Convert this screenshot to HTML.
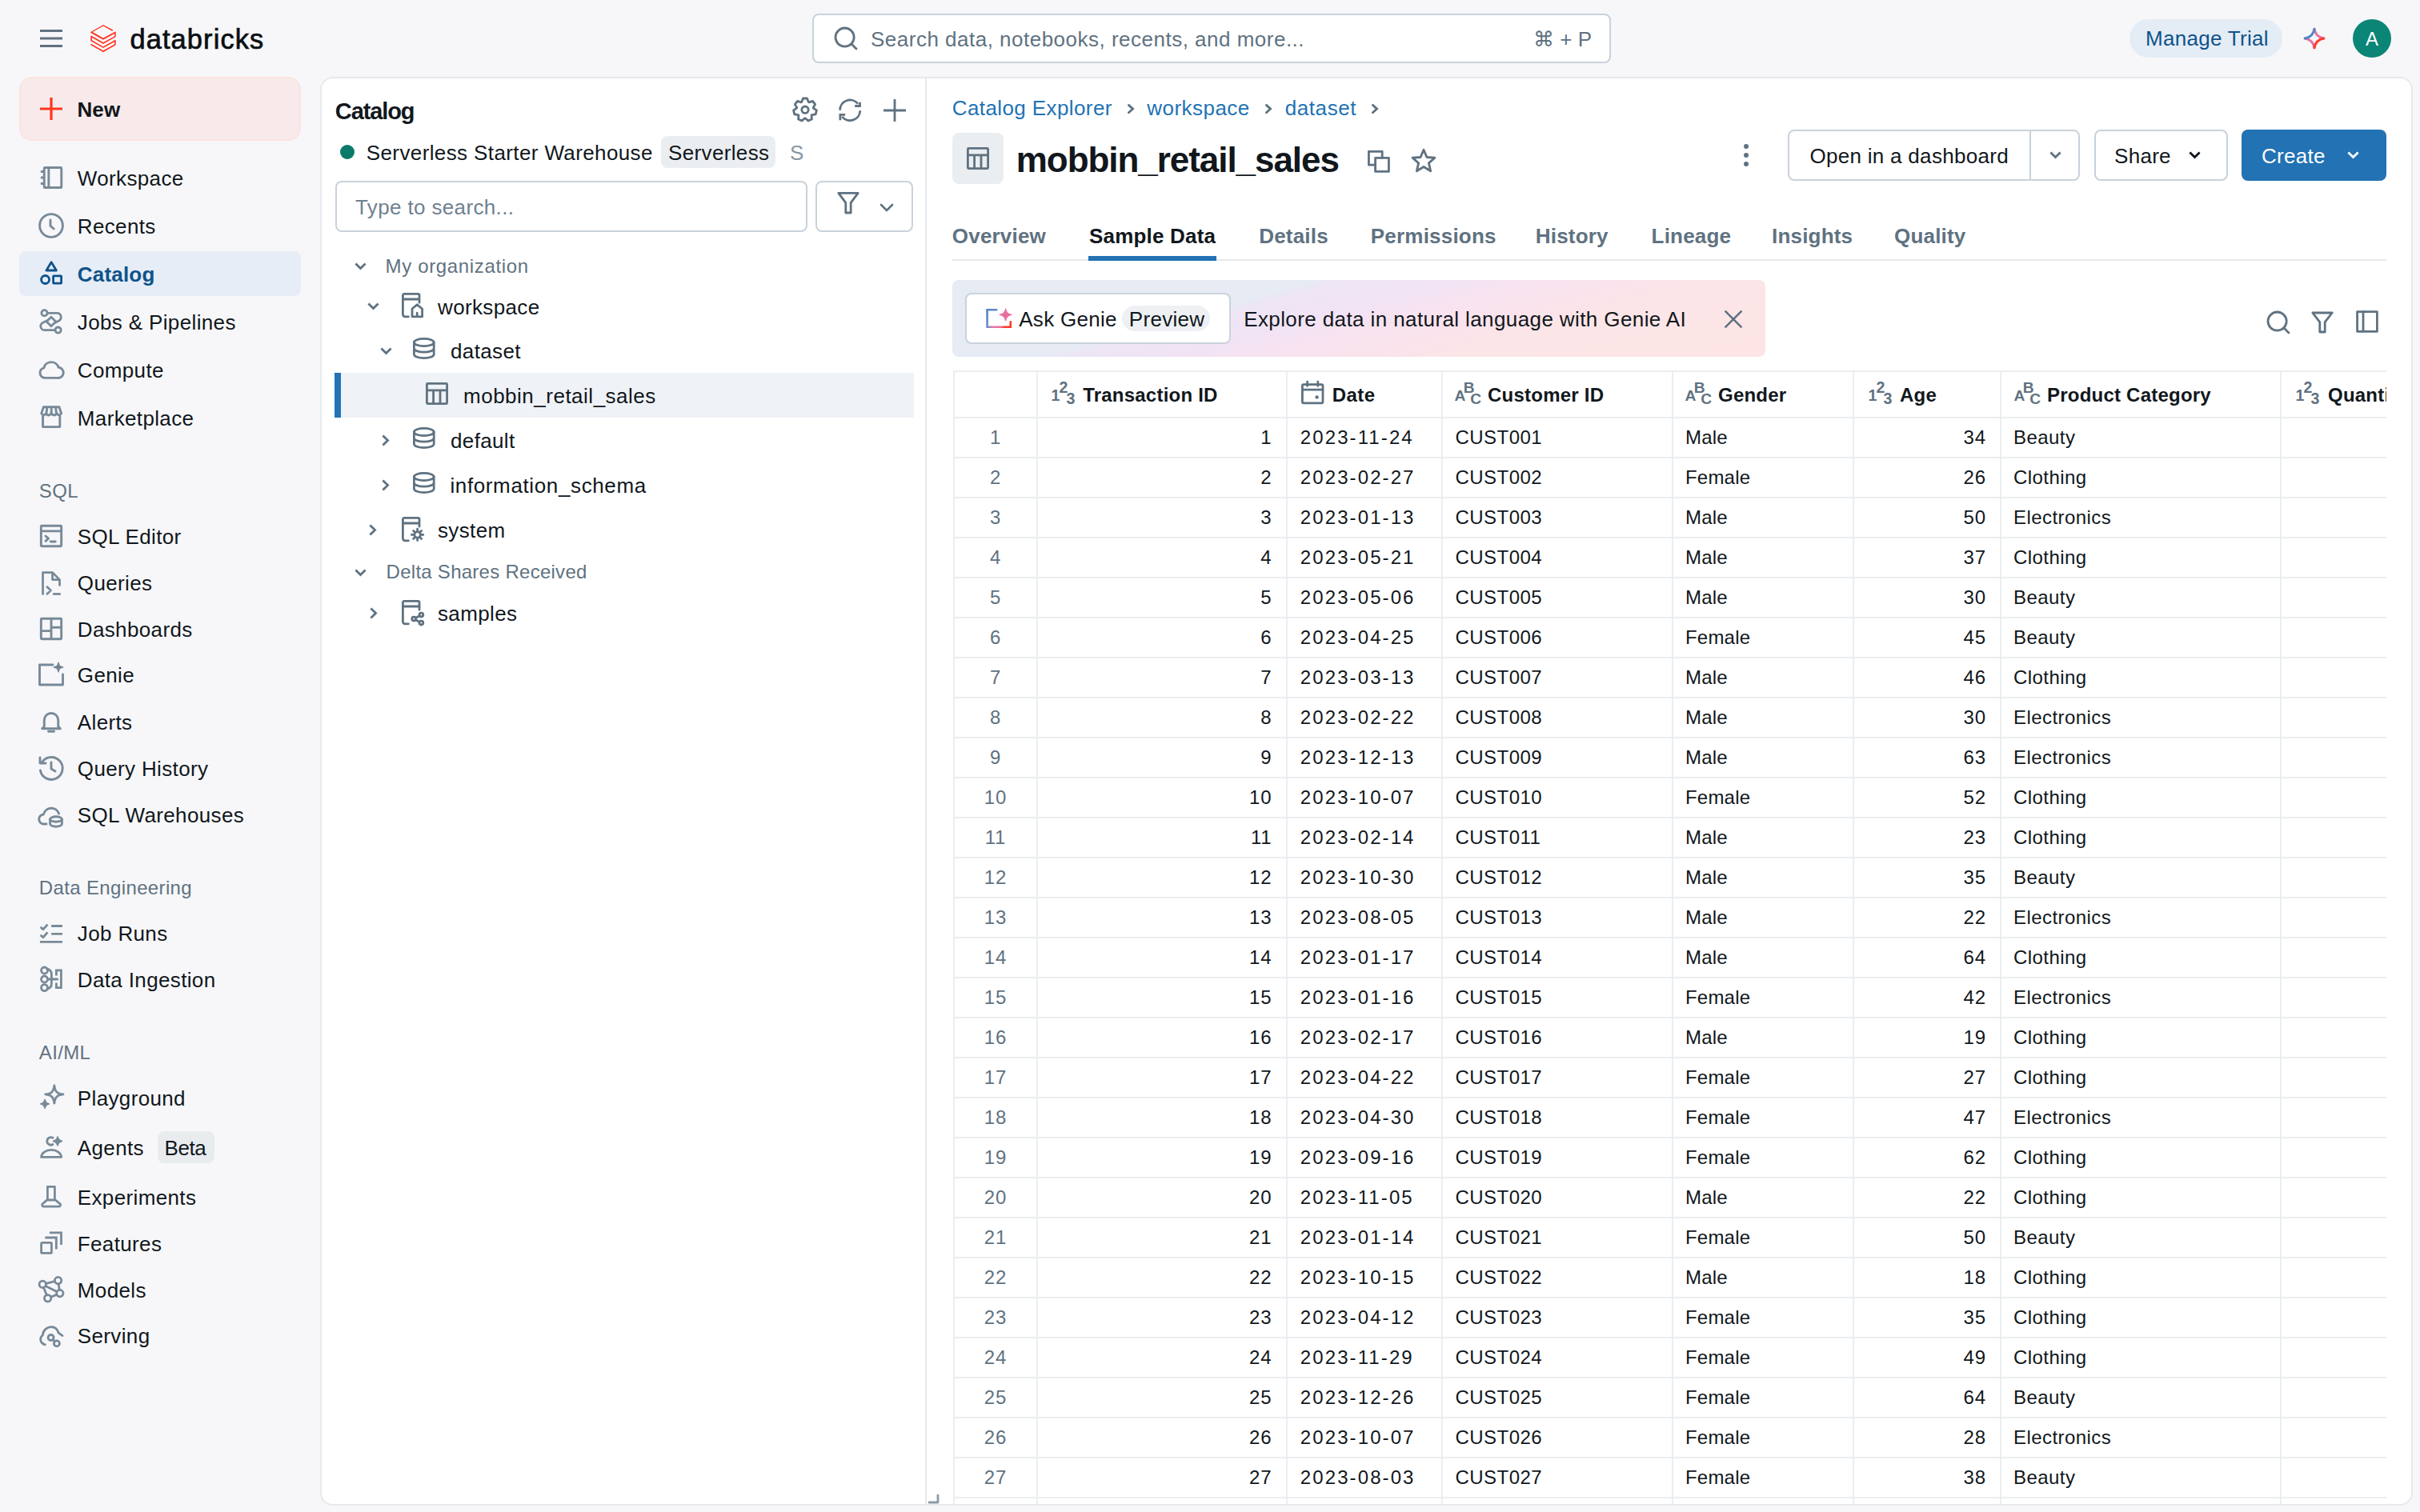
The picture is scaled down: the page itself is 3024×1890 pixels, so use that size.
<!DOCTYPE html>
<html><head><meta charset="utf-8"><title>Catalog Explorer</title>
<style>
html,body{margin:0;padding:0;background:#F7F7F9;overflow:hidden}
#root{position:relative;width:1512px;height:945px;zoom:2;background:#F7F7F9;overflow:hidden;font-family:"Liberation Sans",sans-serif;color:#11171C}
.t{position:absolute;white-space:nowrap}
.b{position:absolute}
.i{position:absolute;overflow:visible}
@media (max-width: 2000px) { #root{zoom:1} }
</style></head><body><div id="root">
<svg class="i" style="left:25px;top:17px" width="14" height="14" viewBox="0 0 14 14" fill="none" stroke="#5F7281" stroke-width="1.5" stroke-linecap="round" stroke-linejoin="round"><path d="M0 2.2H14M0 7H14M0 11.8H14" stroke-linecap="butt"/></svg>
<svg class="i" style="left:56.5px;top:15.5px" width="16" height="17.1" viewBox="0.95 0 22.1 24"><path fill="#FF3621" d="M.95 14.184L12 20.403l9.919-5.55v2.21L12 22.662l-10.484-5.96-.565.308v.77L12 24l11.05-6.218v-4.317l-.515-.309L12 19.118l-9.867-5.653v-2.21L12 16.806l11.05-6.218V6.32l-.515-.308L12 11.6 2.647 6.32 12 1.041l7.76 4.37.668-.359v-.617L12 0 .95 6.32v.614L12 13.207l9.919-5.55v2.26L12 15.52 1.516 9.56l-.565.308Z"/></svg>
<div class="t" style="left:81.2px;top:14.14px;font-size:17.2px;line-height:21.5px;color:#0B0F12;font-weight:400;letter-spacing:0.561px;-webkit-text-stroke:0.35px #0B0F12">databricks</div>
<div class="b" style="left:507.5px;top:8.5px;width:499px;height:31px;background:#fff;border:1px solid #C8D2DC;border-radius:4px;box-sizing:border-box"></div>
<svg class="i" style="left:521px;top:16.5px" width="15" height="15" viewBox="0 0 15 15" fill="none" stroke="#5F7281" stroke-width="1.4" stroke-linecap="round" stroke-linejoin="round"><circle cx="6.8" cy="6.8" r="5.8"/><path d="M11 11 L14 14"/></svg>
<div class="t" style="left:544px;top:16.37px;font-size:13px;line-height:16.25px;color:#5F7281;font-weight:400;letter-spacing:0.247px;">Search data, notebooks, recents, and more...</div>
<div class="t" style="right:517.5px;top:16.37px;font-size:13px;line-height:16.25px;color:#5F7281;font-weight:400;letter-spacing:0px;">&#8984; + P</div>
<div class="b" style="left:1330.5px;top:12px;width:95.5px;height:24px;background:#E4ECF5;border-radius:12px"></div>
<div class="t" style="left:1340.5px;top:15.87px;font-size:13px;line-height:16.25px;color:#0E538B;font-weight:400;letter-spacing:0.15px;">Manage Trial</div>
<svg class="i" style="left:1439px;top:17px" width="14" height="14" viewBox="0 0 14 14" fill="none" stroke="#788A99" stroke-width="1.5" stroke-linecap="round" stroke-linejoin="round"><path d="M7 1.1 C7.6 4.6 9.4 6.4 12.9 7" stroke="#E3739F"/><path d="M1.1 7 C4.6 7.6 6.4 9.4 7 12.9" stroke="#E3739F"/><path d="M7 1.1 C6.4 4.6 4.6 6.4 1.1 7" stroke="#5086C6"/><path d="M12.9 7 C9.4 7.6 7.6 9.4 7 12.9" stroke="#FF3B2B"/></svg>
<div class="b" style="left:1470px;top:12px;width:24px;height:24px;background:#0B8576;border-radius:50%"></div>
<div class="t" style="left:1432.0px;width:100px;text-align:center;top:16.84px;font-size:12px;line-height:15.0px;color:#fff;font-weight:400;letter-spacing:0px">A</div>
<div class="b" style="left:12px;top:48px;width:176px;height:40px;background:#F8EAEA;border:1px solid #FCE3E0;border-radius:8px;box-sizing:border-box"></div>
<svg class="i" style="left:25px;top:61px" width="14" height="14" viewBox="0 0 14 14" fill="none" stroke="#FF3621" stroke-width="1.6" stroke-linecap="round" stroke-linejoin="round"><path d="M7 0V14M0 7H14" stroke-linecap="butt"/></svg>
<div class="t" style="left:48.2px;top:60.37px;font-size:13px;line-height:16.25px;color:#11171C;font-weight:700;letter-spacing:0.1px;">New</div>
<div class="b" style="left:12px;top:157px;width:176px;height:28px;background:#E6EDF6;border-radius:4px"></div>
<svg class="i" style="left:25.10px;top:103.80px" width="14" height="14" viewBox="0 0 16 16" fill="none" stroke="#788A99" stroke-width="1.66" stroke-linecap="round" stroke-linejoin="round"><rect x="3" y="0.9" width="12.3" height="14.2" rx="0.6"/><path d="M6.2 0.9V15.1M0.5 3.7H3M0.5 8H3M0.5 12.3H3" stroke-linecap="butt"/></svg>
<div class="t" style="left:48.4px;top:103.37px;font-size:13px;line-height:16.25px;color:#11171C;font-weight:400;letter-spacing:0.18px;">Workspace</div>
<svg class="i" style="left:24.10px;top:132.80px" width="16" height="16" viewBox="0 0 16 16" fill="none" stroke="#788A99" stroke-width="1.45" stroke-linecap="round" stroke-linejoin="round"><circle cx="8" cy="8" r="7.2"/><path d="M7.5 4.5V8.2L9.6 10"/></svg>
<div class="t" style="left:48.4px;top:133.37px;font-size:13px;line-height:16.25px;color:#11171C;font-weight:400;letter-spacing:0.18px;">Recents</div>
<svg class="i" style="left:22px;top:160px" width="20" height="20" viewBox="0 0 20 20" fill="none" stroke="#0E538B" stroke-width="1.4" stroke-linecap="round" stroke-linejoin="round"><path d="M10.07 3.9 L13.2 9.0 H6.95 Z"/><circle cx="6.28" cy="14.75" r="2.5"/><rect x="11.3" y="12.4" width="5" height="4.7" rx="0.3"/></svg>
<div class="t" style="left:48.4px;top:163.37px;font-size:13px;line-height:16.25px;color:#0E538B;font-weight:700;letter-spacing:0.1px;">Catalog</div>
<svg class="i" style="left:22px;top:190px" width="20" height="20" viewBox="0 0 20 20" fill="none" stroke="#788A99" stroke-width="1.4" stroke-linecap="round" stroke-linejoin="round"><circle cx="5.75" cy="5.65" r="1.8"/><circle cx="14.3" cy="16.3" r="1.8"/><path d="M7.6 5.65 H13.6 A2.55 2.55 0 0 1 14.7 10.5 L12.6 11.6 M7.4 10.4 L5.4 11.4 A2.45 2.45 0 0 0 6.4 16.3 H12.5"/><path d="M9.97 8.1 L12.85 10.98 L9.97 13.86 L7.09 10.98 Z"/></svg>
<div class="t" style="left:48.4px;top:193.37px;font-size:13px;line-height:16.25px;color:#11171C;font-weight:400;letter-spacing:0.18px;">Jobs &amp; Pipelines</div>
<svg class="i" style="left:24.10px;top:222.80px" width="16" height="16" viewBox="0 0 16 16" fill="none" stroke="#788A99" stroke-width="1.45" stroke-linecap="round" stroke-linejoin="round"><path d="M4.2 13.2 H12 A3.3 3.3 0 0 0 12.6 6.6 A4.8 4.8 0 0 0 3.4 6.9 A3.2 3.2 0 0 0 4.2 13.2 Z"/></svg>
<div class="t" style="left:48.4px;top:223.37px;font-size:13px;line-height:16.25px;color:#11171C;font-weight:400;letter-spacing:0.18px;">Compute</div>
<svg class="i" style="left:25.00px;top:253.70px" width="14.2" height="14.2" viewBox="0 0 16 16" fill="none" stroke="#788A99" stroke-width="1.63" stroke-linecap="round" stroke-linejoin="round"><path d="M2 7.5 V15 H14 V7.5 M1 5.5 L2.5 1 H13.5 L15 5.5 Q13.5 8 12 5.5 Q10 8 8 5.5 Q6 8 4 5.5 Q2.5 8 1 5.5Z M5 1 L4.5 5.5 M8 1 V5.5 M11 1 L11.5 5.5"/></svg>
<div class="t" style="left:48.4px;top:253.37px;font-size:13px;line-height:16.25px;color:#11171C;font-weight:400;letter-spacing:0.18px;">Marketplace</div>
<svg class="i" style="left:25.10px;top:327.80px" width="14" height="14" viewBox="0 0 16 16" fill="none" stroke="#788A99" stroke-width="1.66" stroke-linecap="round" stroke-linejoin="round"><rect x="0.75" y="0.75" width="14.5" height="14.5" rx="0.5"/><path d="M0.75 4.5H15.25M4 8L6 9.8L4 11.6M7.5 12H11"/></svg>
<div class="t" style="left:48.4px;top:327.37px;font-size:13px;line-height:16.25px;color:#11171C;font-weight:400;letter-spacing:0.18px;">SQL Editor</div>
<svg class="i" style="left:22px;top:353px" width="20" height="20" viewBox="0 0 20 20" fill="none" stroke="#788A99" stroke-width="1.38" stroke-linecap="round" stroke-linejoin="round"><path d="M4.76 18.25 V4.76 H10.76 L15.27 9.3 V12.8 M10.76 4.76 V9.3 H15.27 M7.4 13.8 L9.7 16 L7.4 18.2"/><path d="M11.05 18.25 H15.9" stroke-linecap="butt"/></svg>
<div class="t" style="left:48.4px;top:356.37px;font-size:13px;line-height:16.25px;color:#11171C;font-weight:400;letter-spacing:0.18px;">Queries</div>
<svg class="i" style="left:25.10px;top:385.80px" width="14" height="14" viewBox="0 0 16 16" fill="none" stroke="#788A99" stroke-width="1.66" stroke-linecap="round" stroke-linejoin="round"><rect x="0.75" y="0.75" width="14.5" height="14.5" rx="0.5"/><path d="M8 0.75V15.25M8 7H15.25M0.75 9.5H8"/></svg>
<div class="t" style="left:48.4px;top:385.37px;font-size:13px;line-height:16.25px;color:#11171C;font-weight:400;letter-spacing:0.18px;">Dashboards</div>
<svg class="i" style="left:24.10px;top:413.50px" width="16" height="16" viewBox="0 0 16 16" fill="none" stroke="#788A99" stroke-width="1.45" stroke-linecap="round" stroke-linejoin="round"><path d="M9 2 H0.75 V14.5 H15.25 V8 M0.75 14.5 H15.25"/><path d="M12.5 0.5 L13.3 2.7 L15.5 3.5 L13.3 4.3 L12.5 6.5 L11.7 4.3 L9.5 3.5 L11.7 2.7Z" fill="#6F7F8C" stroke-width="0.6"/></svg>
<div class="t" style="left:48.4px;top:414.07px;font-size:13px;line-height:16.25px;color:#11171C;font-weight:400;letter-spacing:0.18px;">Genie</div>
<svg class="i" style="left:25.10px;top:443.80px" width="14" height="14" viewBox="0 0 16 16" fill="none" stroke="#788A99" stroke-width="1.66" stroke-linecap="round" stroke-linejoin="round"><path d="M3 11.5 V7 A5 5 0 0 1 13 7 V11.5 L14.5 13 H1.5 Z M6 15 H10"/></svg>
<div class="t" style="left:48.4px;top:443.37px;font-size:13px;line-height:16.25px;color:#11171C;font-weight:400;letter-spacing:0.18px;">Alerts</div>
<svg class="i" style="left:24.10px;top:471.80px" width="16" height="16" viewBox="0 0 16 16" fill="none" stroke="#788A99" stroke-width="1.45" stroke-linecap="round" stroke-linejoin="round"><path d="M2.5 4 A7 7 0 1 1 1.2 9.5 M1 1.5 V5 H4.5 M8 4.5 V8.5 L10.5 10"/></svg>
<div class="t" style="left:48.4px;top:472.37px;font-size:13px;line-height:16.25px;color:#11171C;font-weight:400;letter-spacing:0.18px;">Query History</div>
<svg class="i" style="left:24.10px;top:500.80px" width="16" height="16" viewBox="0 0 16 16" fill="none" stroke="#788A99" stroke-width="1.45" stroke-linecap="round" stroke-linejoin="round"><path d="M5 14 H3.5 A3 3 0 0 1 3.2 8 A5 5 0 0 1 12.8 7.5"/><ellipse cx="11" cy="11" rx="3.7" ry="1.6"/><path d="M7.3 11 V14 A3.7 1.6 0 0 0 14.7 14 V11"/></svg>
<div class="t" style="left:48.4px;top:501.37px;font-size:13px;line-height:16.25px;color:#11171C;font-weight:400;letter-spacing:0.18px;">SQL Warehouses</div>
<svg class="i" style="left:22px;top:572px" width="20" height="20" viewBox="0 0 20 20" fill="none" stroke="#788A99" stroke-width="1.4" stroke-linecap="round" stroke-linejoin="round"><path d="M3.3 7.4 L4.9 8.9 L7.75 5.8 M3.3 12.4 L4.9 13.9 L7.75 10.7" stroke-linecap="butt"/><path d="M10.07 6.76 H17.0 M10.07 11.7 H17.0 M2.96 16.7 H17.0" stroke-linecap="butt"/></svg>
<div class="t" style="left:48.4px;top:575.37px;font-size:13px;line-height:16.25px;color:#11171C;font-weight:400;letter-spacing:0.18px;">Job Runs</div>
<svg class="i" style="left:22px;top:601px" width="20" height="20" viewBox="0 0 20 20" fill="none" stroke="#788A99" stroke-width="1.4" stroke-linecap="round" stroke-linejoin="round"><circle cx="5.77" cy="5.5" r="2.0"/><circle cx="5.77" cy="11" r="2.0"/><circle cx="5.77" cy="16.3" r="2.0"/><path d="M7.4 4.6 Q10.2 5.2 10.2 8 V13.8 Q10.2 16.6 7.4 17.2 M7.8 11 H13.9"/><path d="M13.2 8.7 V5.4 H16.2 V16.3 H13.2 V13.3" stroke-linecap="butt" stroke-linejoin="miter"/></svg>
<div class="t" style="left:48.4px;top:604.37px;font-size:13px;line-height:16.25px;color:#11171C;font-weight:400;letter-spacing:0.18px;">Data Ingestion</div>
<svg class="i" style="left:22px;top:675px" width="20" height="20" viewBox="0 0 20 20" fill="none" stroke="#788A99" stroke-width="1.4" stroke-linecap="round" stroke-linejoin="round"><path d="M11.93 3.4 C12.4 7.3 13.6 8.5 17.5 8.99 C13.6 9.5 12.4 10.7 11.93 14.6 C11.45 10.7 10.25 9.5 6.35 8.99 C10.25 8.5 11.45 7.3 11.93 3.4Z"/><path d="M6.03 12.3 Q6.4 14.5 8.6 14.9 Q6.4 15.3 6.03 17.5 Q5.66 15.3 3.46 14.9 Q5.66 14.5 6.03 12.3Z" fill="#788A99" stroke-width="0.9"/></svg>
<div class="t" style="left:48.4px;top:678.37px;font-size:13px;line-height:16.25px;color:#11171C;font-weight:400;letter-spacing:0.18px;">Playground</div>
<svg class="i" style="left:22px;top:706px" width="20" height="20" viewBox="0 0 20 20" fill="none" stroke="#788A99" stroke-width="1.4" stroke-linecap="round" stroke-linejoin="round"><path d="M11 9.28 A2.4 2.4 0 1 1 11 5.12"/><path d="M14 4.6 Q14.4 6.8 16.6 7.2 Q14.4 7.6 14 9.8 Q13.6 7.6 11.4 7.2 Q13.6 6.8 14 4.6Z" fill="#788A99" stroke-width="1"/><path d="M3.8 17.2 A6.25 4.5 0 0 1 16.3 17.2 Z"/></svg>
<div class="t" style="left:48.4px;top:709.37px;font-size:13px;line-height:16.25px;color:#11171C;font-weight:400;letter-spacing:0.18px;">Agents</div>
<svg class="i" style="left:22px;top:737px" width="20" height="20" viewBox="0 0 20 20" fill="none" stroke="#788A99" stroke-width="1.4" stroke-linecap="round" stroke-linejoin="round"><path d="M7.7 12.7 V4.7 H12.2 V12.7 L15.7 15.6 A1.1 1.1 0 0 1 15 17.1 H5.1 A1.1 1.1 0 0 1 4.4 15.6 Z M7.7 13 H12.2"/></svg>
<div class="t" style="left:48.4px;top:740.37px;font-size:13px;line-height:16.25px;color:#11171C;font-weight:400;letter-spacing:0.18px;">Experiments</div>
<svg class="i" style="left:22px;top:766px" width="20" height="20" viewBox="0 0 20 20" fill="none" stroke="#788A99" stroke-width="1.4" stroke-linecap="round" stroke-linejoin="round"><rect x="3.8" y="10.7" width="6.4" height="6.5" rx="0.6"/><path d="M6.15 7.5 H13.17 V14.8 M8.96 4.4 H16.26 V12" stroke-linecap="butt" stroke-linejoin="miter"/></svg>
<div class="t" style="left:48.4px;top:769.37px;font-size:13px;line-height:16.25px;color:#11171C;font-weight:400;letter-spacing:0.18px;">Features</div>
<svg class="i" style="left:22px;top:795px" width="20" height="20" viewBox="0 0 20 20" fill="none" stroke="#788A99" stroke-width="1.4" stroke-linecap="round" stroke-linejoin="round"><circle cx="4.63" cy="7.7" r="2.1"/><circle cx="14.3" cy="5.3" r="2.1"/><circle cx="15.4" cy="13.3" r="2.1"/><circle cx="7.83" cy="16.4" r="2.1"/><path d="M6.7 7.2 L12.2 5.8 M6.4 8.8 L13.5 12.2 M5.2 9.7 L7.2 14.4 M14.6 7.4 L15.1 11.2 M13.4 14.2 L9.8 15.6"/></svg>
<div class="t" style="left:48.4px;top:798.37px;font-size:13px;line-height:16.25px;color:#11171C;font-weight:400;letter-spacing:0.18px;">Models</div>
<svg class="i" style="left:22px;top:823.6px" width="20" height="20" viewBox="0 0 20 20" fill="none" stroke="#788A99" stroke-width="1.4" stroke-linecap="round" stroke-linejoin="round"><path d="M6.2 16.9 C3.5 16.4 2.2 13.2 4.6 11 C5.2 7.2 8 5.8 10 5.8 C12.3 5.8 13.9 7.4 14.5 9.4 L17 11.3"/><circle cx="9.8" cy="12.5" r="1.75"/><circle cx="13.45" cy="16.2" r="1.75"/><path d="M11 13.7 L12.2 15"/></svg>
<div class="t" style="left:48.4px;top:826.97px;font-size:13px;line-height:16.25px;color:#11171C;font-weight:400;letter-spacing:0.18px;">Serving</div>
<div class="t" style="left:24.4px;top:299.34px;font-size:12px;line-height:15.0px;color:#5F7281;font-weight:400;letter-spacing:0.18px;">SQL</div>
<div class="t" style="left:24.4px;top:547.34px;font-size:12px;line-height:15.0px;color:#5F7281;font-weight:400;letter-spacing:0.18px;">Data Engineering</div>
<div class="t" style="left:24.4px;top:650.34px;font-size:12px;line-height:15.0px;color:#5F7281;font-weight:400;letter-spacing:0.18px;">AI/ML</div>
<div class="b" style="left:98.5px;top:707px;width:35.5px;height:20px;background:#E9ECEF;border-radius:4px"></div>
<div class="t" style="left:102.8px;top:709.37px;font-size:13px;line-height:16.25px;color:#11171C;font-weight:400;letter-spacing:-0.236px;">Beta</div>
<div class="b" style="left:200px;top:48px;width:1307.5px;height:893px;background:#fff;border:1px solid #E6E9ED;border-radius:8px;box-sizing:border-box"></div>
<div class="b" style="left:578px;top:49px;width:1px;height:891px;background:#E6E9ED"></div>
<div class="t" style="left:209.4px;top:60.72px;font-size:14.5px;line-height:18.12px;color:#11171C;font-weight:700;letter-spacing:-0.553px;">Catalog</div>
<svg class="i" style="left:495px;top:61px" width="16" height="16" viewBox="0 0 16 16" fill="none" stroke="#5F7281" stroke-width="1.4" stroke-linecap="round" stroke-linejoin="round"><path d="M5.84 2.76 L6.75 0.51 L9.25 0.51 L10.16 2.76 L10.44 2.90 L12.76 2.20 L14.32 4.16 L13.13 6.27 L13.20 6.58 L15.19 7.96 L14.63 10.40 L12.24 10.78 L12.04 11.03 L12.20 13.45 L9.95 14.53 L8.16 12.90 L7.84 12.90 L6.05 14.53 L3.80 13.45 L3.96 11.03 L3.76 10.78 L1.37 10.40 L0.81 7.96 L2.80 6.58 L2.87 6.27 L1.68 4.16 L3.24 2.20 L5.56 2.90 Z"/><circle cx="8" cy="7.6" r="2.1"/></svg>
<svg class="i" style="left:523px;top:61px" width="16" height="16" viewBox="0 0 16 16" fill="none" stroke="#5F7281" stroke-width="1.4" stroke-linecap="round" stroke-linejoin="round"><path d="M1.8 7.9 A6.3 6.3 0 0 1 13 3.85 M3.2 11.95 A6.3 6.3 0 0 0 14.4 8.1" stroke-linecap="butt"/><path d="M14.25 2.9 V5.25 H11.1 M1.95 14.1 V10.7 H5.1" stroke-linecap="butt" stroke-linejoin="miter"/></svg>
<svg class="i" style="left:552px;top:62px" width="14" height="14" viewBox="0 0 14 14" fill="none" stroke="#5F7281" stroke-width="1.4" stroke-linecap="round" stroke-linejoin="round"><path d="M7 0V14M0 7H14" stroke-linecap="butt"/></svg>
<div class="b" style="left:212.6px;top:90.6px;width:9px;height:9px;background:#0A7A69;border-radius:50%"></div>
<div class="t" style="left:228.9px;top:87.27px;font-size:13px;line-height:16.25px;color:#11171C;font-weight:400;letter-spacing:0.192px;">Serverless Starter Warehouse</div>
<div class="b" style="left:413px;top:85px;width:71.3px;height:20px;background:#EBEEF1;border-radius:4px"></div>
<div class="t" style="left:417.5px;top:87.27px;font-size:13px;line-height:16.25px;color:#11171C;font-weight:400;letter-spacing:0.18px;">Serverless</div>
<div class="t" style="left:493.5px;top:87.27px;font-size:13px;line-height:16.25px;color:#8696A3;font-weight:400;letter-spacing:0.18px;">S</div>
<div class="b" style="left:209.5px;top:113px;width:295px;height:32px;background:#fff;border:1px solid #C8D2DC;border-radius:4px;box-sizing:border-box"></div>
<div class="t" style="left:222px;top:121.37px;font-size:13px;line-height:16.25px;color:#6F8190;font-weight:400;letter-spacing:0.18px;">Type to search...</div>
<div class="b" style="left:509.3px;top:113px;width:61.2px;height:32px;background:#fff;border:1px solid #C8D2DC;border-radius:4px;box-sizing:border-box"></div>
<svg class="i" style="left:523px;top:119.5px" width="14" height="15" viewBox="0 0 14 15" fill="none" stroke="#5F7281" stroke-width="1.4" stroke-linecap="round" stroke-linejoin="round"><path d="M0.9 1.2 H13.1 L8.6 7.2 V13.5 H5.4 V7.2 Z"/></svg>
<svg class="i" style="left:549px;top:125.5px" width="10" height="8" viewBox="0 0 10 8" fill="none" stroke="#5F7281" stroke-width="1.3" stroke-linecap="round" stroke-linejoin="round"><path d="M1.5 2.5 L5 6 L8.5 2.5"/></svg>
<svg class="i" style="left:221.25px;top:164.2px" width="7.5" height="4.6" viewBox="0 0 7.5 4.6" fill="none" stroke="#5F7281" stroke-width="1.4" stroke-linecap="round" stroke-linejoin="round"><path d="M0.7 0.7 L3.75 3.8 L6.8 0.7" stroke-linecap="butt" stroke-linejoin="miter"/></svg>
<div class="t" style="left:240.8px;top:159.24px;font-size:12px;line-height:15.0px;color:#5F7281;font-weight:400;letter-spacing:0.326px;">My organization</div>
<svg class="i" style="left:229.25px;top:189.2px" width="7.5" height="4.6" viewBox="0 0 7.5 4.6" fill="none" stroke="#5F7281" stroke-width="1.4" stroke-linecap="round" stroke-linejoin="round"><path d="M0.7 0.7 L3.75 3.8 L6.8 0.7" stroke-linecap="butt" stroke-linejoin="miter"/></svg>
<svg class="i" style="left:251.2px;top:183.2px" width="14" height="16" viewBox="0 0 14 16" fill="none" stroke="#5F7281" stroke-width="1.4" stroke-linecap="round" stroke-linejoin="round"><path d="M11 6.1 V1.5 A0.8 0.8 0 0 0 10.2 0.7 H1.5 A0.8 0.8 0 0 0 0.7 1.5 V13.5 A1.4 1.4 0 0 0 2.1 14.9 H4.2 M0.7 4 H11 M6.5 14.9 V10 L9.6 7.4 L12.8 10 V14.9 Z M9.6 14.9 V12.6"/></svg>
<div class="t" style="left:273.5px;top:183.77px;font-size:13px;line-height:16.25px;color:#11171C;font-weight:400;letter-spacing:0.18px;">workspace</div>
<svg class="i" style="left:237.25px;top:217.1px" width="7.5" height="4.6" viewBox="0 0 7.5 4.6" fill="none" stroke="#5F7281" stroke-width="1.4" stroke-linecap="round" stroke-linejoin="round"><path d="M0.7 0.7 L3.75 3.8 L6.8 0.7" stroke-linecap="butt" stroke-linejoin="miter"/></svg>
<svg class="i" style="left:258.1px;top:211.2px" width="14" height="14" viewBox="0 0 14 14" fill="none" stroke="#5F7281" stroke-width="1.4" stroke-linecap="round" stroke-linejoin="round"><ellipse cx="6.9" cy="3" rx="6.2" ry="2.3"/><path d="M0.7 3 V10.5 A6.2 2.3 0 0 0 13.1 10.5 V3 M0.7 6.8 A6.2 2.3 0 0 0 13.1 6.8"/></svg>
<div class="t" style="left:281.5px;top:211.57px;font-size:13px;line-height:16.25px;color:#11171C;font-weight:400;letter-spacing:0.18px;">dataset</div>
<div class="b" style="left:209px;top:233px;width:362px;height:28px;background:#EFF2F6"></div>
<div class="b" style="left:209px;top:233px;width:4px;height:28px;background:#2272B4"></div>
<svg class="i" style="left:266px;top:239px" width="14" height="14" viewBox="0 0 14 14" fill="none" stroke="#5F7281" stroke-width="1.4" stroke-linecap="round" stroke-linejoin="round"><rect x="0.7" y="0.7" width="12.6" height="12.6" rx="0.5"/><path d="M0.7 4.95 H13.3 M4.8 4.95 V13.3 M9.0 4.95 V13.3"/></svg>
<div class="t" style="left:289.5px;top:239.37px;font-size:13px;line-height:16.25px;color:#11171C;font-weight:400;letter-spacing:0.252px;">mobbin_retail_sales</div>
<svg class="i" style="left:238.7px;top:271.25px" width="4.6" height="7.5" viewBox="0 0 4.6 7.5" fill="none" stroke="#5F7281" stroke-width="1.4" stroke-linecap="round" stroke-linejoin="round"><path d="M0.7 0.7 L3.8 3.75 L0.7 6.8" stroke-linecap="butt" stroke-linejoin="miter"/></svg>
<svg class="i" style="left:258.1px;top:267.2px" width="14" height="14" viewBox="0 0 14 14" fill="none" stroke="#5F7281" stroke-width="1.4" stroke-linecap="round" stroke-linejoin="round"><ellipse cx="6.9" cy="3" rx="6.2" ry="2.3"/><path d="M0.7 3 V10.5 A6.2 2.3 0 0 0 13.1 10.5 V3 M0.7 6.8 A6.2 2.3 0 0 0 13.1 6.8"/></svg>
<div class="t" style="left:281.5px;top:267.37px;font-size:13px;line-height:16.25px;color:#11171C;font-weight:400;letter-spacing:0.18px;">default</div>
<svg class="i" style="left:238.7px;top:299.25px" width="4.6" height="7.5" viewBox="0 0 4.6 7.5" fill="none" stroke="#5F7281" stroke-width="1.4" stroke-linecap="round" stroke-linejoin="round"><path d="M0.7 0.7 L3.8 3.75 L0.7 6.8" stroke-linecap="butt" stroke-linejoin="miter"/></svg>
<svg class="i" style="left:258.1px;top:295.2px" width="14" height="14" viewBox="0 0 14 14" fill="none" stroke="#5F7281" stroke-width="1.4" stroke-linecap="round" stroke-linejoin="round"><ellipse cx="6.9" cy="3" rx="6.2" ry="2.3"/><path d="M0.7 3 V10.5 A6.2 2.3 0 0 0 13.1 10.5 V3 M0.7 6.8 A6.2 2.3 0 0 0 13.1 6.8"/></svg>
<div class="t" style="left:281.2px;top:295.37px;font-size:13px;line-height:16.25px;color:#11171C;font-weight:400;letter-spacing:0.314px;">information_schema</div>
<svg class="i" style="left:230.7px;top:327.25px" width="4.6" height="7.5" viewBox="0 0 4.6 7.5" fill="none" stroke="#5F7281" stroke-width="1.4" stroke-linecap="round" stroke-linejoin="round"><path d="M0.7 0.7 L3.8 3.75 L0.7 6.8" stroke-linecap="butt" stroke-linejoin="miter"/></svg>
<svg class="i" style="left:251.2px;top:323.2px" width="14" height="16" viewBox="0 0 14 16" fill="none" stroke="#5F7281" stroke-width="1.4" stroke-linecap="round" stroke-linejoin="round"><path d="M11 6.1 V1.5 A0.8 0.8 0 0 0 10.2 0.7 H1.5 A0.8 0.8 0 0 0 0.7 1.5 V13.5 A1.4 1.4 0 0 0 2.1 14.9 H4.2 M0.7 4 H11"/><circle cx="9.8" cy="11.2" r="1.9"/><path d="M9.8 7.6V8.6M9.8 13.8V14.8M6.2 11.2H7.2M12.4 11.2H13.4M7.3 8.7L8 9.4M11.6 13L12.3 13.7M7.3 13.7L8 13M11.6 9.4L12.3 8.7"/></svg>
<div class="t" style="left:273.5px;top:323.37px;font-size:13px;line-height:16.25px;color:#11171C;font-weight:400;letter-spacing:0.18px;">system</div>
<svg class="i" style="left:221.25px;top:355.3px" width="7.5" height="4.6" viewBox="0 0 7.5 4.6" fill="none" stroke="#5F7281" stroke-width="1.4" stroke-linecap="round" stroke-linejoin="round"><path d="M0.7 0.7 L3.75 3.8 L6.8 0.7" stroke-linecap="butt" stroke-linejoin="miter"/></svg>
<div class="t" style="left:241.3px;top:349.84px;font-size:12px;line-height:15.0px;color:#5F7281;font-weight:400;letter-spacing:0.132px;">Delta Shares Received</div>
<svg class="i" style="left:231.1px;top:379.25px" width="4.6" height="7.5" viewBox="0 0 4.6 7.5" fill="none" stroke="#5F7281" stroke-width="1.4" stroke-linecap="round" stroke-linejoin="round"><path d="M0.7 0.7 L3.8 3.75 L0.7 6.8" stroke-linecap="butt" stroke-linejoin="miter"/></svg>
<svg class="i" style="left:251.2px;top:375.2px" width="14" height="16" viewBox="0 0 14 16" fill="none" stroke="#5F7281" stroke-width="1.4" stroke-linecap="round" stroke-linejoin="round"><path d="M11 6.1 V1.5 A0.8 0.8 0 0 0 10.2 0.7 H1.5 A0.8 0.8 0 0 0 0.7 1.5 V13.5 A1.4 1.4 0 0 0 2.1 14.9 H4.2"/><path d="M0.7 4 H11"/><circle cx="12.2" cy="9.3" r="1.2"/><circle cx="7.6" cy="11.8" r="1.2"/><circle cx="12.2" cy="14.3" r="1.2"/><path d="M8.7 11.2 L11.1 9.9 M8.7 12.4 L11.1 13.7"/></svg>
<div class="t" style="left:273.5px;top:375.37px;font-size:13px;line-height:16.25px;color:#11171C;font-weight:400;letter-spacing:0.18px;">samples</div>
<svg class="i" style="left:580px;top:934px" width="7" height="6" viewBox="0 0 7 6" fill="none" stroke="#8E9BA6" stroke-width="1.4" stroke-linecap="round" stroke-linejoin="round"><path d="M6 0 V5 H0" stroke-linecap="butt"/></svg>
<div class="t" style="left:594.9px;top:59.37px;font-size:13px;line-height:16.25px;color:#2272B4;font-weight:400;letter-spacing:0.198px;">Catalog Explorer</div>
<div class="t" style="left:716.6px;top:59.37px;font-size:13px;line-height:16.25px;color:#2272B4;font-weight:400;letter-spacing:0.24px;">workspace</div>
<div class="t" style="left:802.9px;top:59.37px;font-size:13px;line-height:16.25px;color:#2272B4;font-weight:400;letter-spacing:0.28px;">dataset</div>
<svg class="i" style="left:704.35px;top:64.75px" width="4" height="6.1" viewBox="0 0 4 6.1" fill="none" stroke="#5F7281" stroke-width="1.4" stroke-linecap="round" stroke-linejoin="round"><path d="M0.7 0.7 L3.3 3.05 L0.7 5.4" stroke-linejoin="miter"/></svg>
<svg class="i" style="left:790.3px;top:64.75px" width="4" height="6.1" viewBox="0 0 4 6.1" fill="none" stroke="#5F7281" stroke-width="1.4" stroke-linecap="round" stroke-linejoin="round"><path d="M0.7 0.7 L3.3 3.05 L0.7 5.4" stroke-linejoin="miter"/></svg>
<svg class="i" style="left:856.8px;top:64.75px" width="4" height="6.1" viewBox="0 0 4 6.1" fill="none" stroke="#5F7281" stroke-width="1.4" stroke-linecap="round" stroke-linejoin="round"><path d="M0.7 0.7 L3.3 3.05 L0.7 5.4" stroke-linejoin="miter"/></svg>
<div class="b" style="left:595px;top:83px;width:32px;height:32px;background:#EBEEF1;border-radius:4px"></div>
<svg class="i" style="left:604px;top:92px" width="14" height="14" viewBox="0 0 14 14" fill="none" stroke="#5F7281" stroke-width="1.4" stroke-linecap="round" stroke-linejoin="round"><rect x="0.7" y="0.7" width="12.6" height="12.6" rx="0.5"/><path d="M0.7 4.95 H13.3 M4.8 4.95 V13.3 M9.0 4.95 V13.3"/></svg>
<div class="t" style="left:634.9px;top:86.13px;font-size:22px;line-height:27.5px;color:#11171C;font-weight:700;letter-spacing:-0.528px;">mobbin_retail_sales</div>
<svg class="i" style="left:854px;top:93.5px" width="15" height="15" viewBox="0 0 15 15" fill="none" stroke="#5F7281" stroke-width="1.4" stroke-linecap="round" stroke-linejoin="round"><path d="M9.6 5.2 V1.2 H1.2 V9.6 H5.3"/><rect x="5.3" y="5.2" width="8.4" height="8.5"/></svg>
<svg class="i" style="left:881.4px;top:92.5px" width="16" height="16" viewBox="0 0 17 17" fill="none" stroke="#5F7281" stroke-width="1.5" stroke-linecap="round" stroke-linejoin="round"><path d="M8.5 1.2 L10.6 6.1 L15.9 6.5 L11.9 10 L13.1 15.3 L8.5 12.5 L3.9 15.3 L5.1 10 L1.1 6.5 L6.4 6.1 Z"/></svg>
<div class="b" style="left:1089.4px;top:89.9px;width:3.2px;height:3.2px;background:#5F7281;border-radius:50%"></div>
<div class="b" style="left:1089.4px;top:95.4px;width:3.2px;height:3.2px;background:#5F7281;border-radius:50%"></div>
<div class="b" style="left:1089.4px;top:100.80000000000001px;width:3.2px;height:3.2px;background:#5F7281;border-radius:50%"></div>
<div class="b" style="left:1117px;top:81px;width:182.3px;height:32px;background:#fff;border:1px solid #C8D2DC;border-radius:4px;box-sizing:border-box"></div>
<div class="b" style="left:1268px;top:81px;width:1px;height:32px;background:#C8D2DC"></div>
<div class="t" style="left:1130.7px;top:89.37px;font-size:13px;line-height:16.25px;color:#11171C;font-weight:400;letter-spacing:0.15px;">Open in a dashboard</div>
<svg class="i" style="left:1280.25px;top:94.7px" width="7.5" height="4.6" viewBox="0 0 7.5 4.6" fill="none" stroke="#5F7281" stroke-width="1.4" stroke-linecap="round" stroke-linejoin="round"><path d="M0.7 0.7 L3.75 3.8 L6.8 0.7" stroke-linecap="butt" stroke-linejoin="miter"/></svg>
<div class="b" style="left:1308.5px;top:81px;width:83.5px;height:32px;background:#fff;border:1px solid #C8D2DC;border-radius:4px;box-sizing:border-box"></div>
<div class="t" style="left:1321px;top:89.37px;font-size:13px;line-height:16.25px;color:#11171C;font-weight:400;letter-spacing:0.15px;">Share</div>
<svg class="i" style="left:1367.25px;top:94.7px" width="7.5" height="4.6" viewBox="0 0 7.5 4.6" fill="none" stroke="#11171C" stroke-width="1.4" stroke-linecap="round" stroke-linejoin="round"><path d="M0.7 0.7 L3.75 3.8 L6.8 0.7" stroke-linecap="butt" stroke-linejoin="miter"/></svg>
<div class="b" style="left:1400.5px;top:81px;width:90.5px;height:32px;background:#2272B4;border-radius:4px"></div>
<div class="t" style="left:1413px;top:89.37px;font-size:13px;line-height:16.25px;color:#fff;font-weight:400;letter-spacing:0.15px;">Create</div>
<svg class="i" style="left:1466.25px;top:94.7px" width="7.5" height="4.6" viewBox="0 0 7.5 4.6" fill="none" stroke="#fff" stroke-width="1.4" stroke-linecap="round" stroke-linejoin="round"><path d="M0.7 0.7 L3.75 3.8 L6.8 0.7" stroke-linecap="butt" stroke-linejoin="miter"/></svg>
<div class="t" style="left:594.9px;top:139.37px;font-size:13px;line-height:16.25px;color:#5F7281;font-weight:700;letter-spacing:0.1px;">Overview</div>
<div class="t" style="left:680.5px;top:139.37px;font-size:13px;line-height:16.25px;color:#11171C;font-weight:700;letter-spacing:0.1px;">Sample Data</div>
<div class="t" style="left:786.6px;top:139.37px;font-size:13px;line-height:16.25px;color:#5F7281;font-weight:700;letter-spacing:0.1px;">Details</div>
<div class="t" style="left:856.4px;top:139.37px;font-size:13px;line-height:16.25px;color:#5F7281;font-weight:700;letter-spacing:0.1px;">Permissions</div>
<div class="t" style="left:959.4px;top:139.37px;font-size:13px;line-height:16.25px;color:#5F7281;font-weight:700;letter-spacing:0.1px;">History</div>
<div class="t" style="left:1031.8px;top:139.37px;font-size:13px;line-height:16.25px;color:#5F7281;font-weight:700;letter-spacing:0.1px;">Lineage</div>
<div class="t" style="left:1107px;top:139.37px;font-size:13px;line-height:16.25px;color:#5F7281;font-weight:700;letter-spacing:0.1px;">Insights</div>
<div class="t" style="left:1183.5px;top:139.37px;font-size:13px;line-height:16.25px;color:#5F7281;font-weight:700;letter-spacing:0.1px;">Quality</div>
<div class="b" style="left:595px;top:162px;width:896px;height:1px;background:#E6E9ED"></div>
<div class="b" style="left:680px;top:160px;width:80px;height:3px;background:#2272B4"></div>
<div class="b" style="left:595px;top:175px;width:508px;height:48px;background:linear-gradient(164.3deg,#E6EBF4 0%,#E6EBF4 33.5%,#EDE5F5 36%,#F1E3F5 46%,#F8E3F0 54%,#FAE3EC 62%,#FCE5E7 70%,#FDE5E5 100%);border-radius:4px"></div>
<div class="b" style="left:603px;top:183px;width:166px;height:32px;background:#fff;border:1px solid #C9D3DC;border-radius:4px;box-sizing:border-box"></div>
<svg class="i" style="left:615.5px;top:192px" width="17" height="14" viewBox="0 0 17 14" fill="none" stroke="#788A99" stroke-width="1.3" stroke-linecap="round" stroke-linejoin="round"><defs><linearGradient id="gg" gradientUnits="userSpaceOnUse" x1="1" y1="2" x2="16" y2="13"><stop offset="0" stop-color="#4F86C6"/><stop offset=".35" stop-color="#6C8FCB"/><stop offset=".5" stop-color="#E57AA6"/><stop offset=".72" stop-color="#E86F96"/><stop offset=".8" stop-color="#FF3B2E"/><stop offset="1" stop-color="#FF3621"/></linearGradient></defs><path d="M7.7 1.6 H1.3 V12.4 H15.9 V8.6" stroke="url(#gg)" stroke-linecap="butt" stroke-linejoin="miter"/><path d="M12.8 1 Q13.3 4.2 16.5 4.7 Q13.3 5.2 12.8 8.4 Q12.3 5.2 9.1 4.7 Q12.3 4.2 12.8 1Z" fill="#E8709F" stroke="#E8709F" stroke-width="0.6"/></svg>
<div class="t" style="left:636.6px;top:191.37px;font-size:13px;line-height:16.25px;color:#11171C;font-weight:400;letter-spacing:0.15px;">Ask Genie</div>
<div class="b" style="left:701px;top:191px;width:55px;height:16px;background:#EEF0F3;border-radius:8px"></div>
<div class="t" style="left:705.4px;top:191.37px;font-size:13px;line-height:16.25px;color:#11171C;font-weight:400;letter-spacing:0.15px;">Preview</div>
<div class="t" style="left:777.1px;top:191.37px;font-size:13px;line-height:16.25px;color:#11171C;font-weight:400;letter-spacing:0.198px;">Explore data in natural language with Genie AI</div>
<svg class="i" style="left:1077px;top:193.5px" width="12" height="12" viewBox="0 0 12 12" fill="none" stroke="#5F7281" stroke-width="1.3" stroke-linecap="round" stroke-linejoin="round"><path d="M0.8 0.8 L11.2 11.2 M11.2 0.8 L0.8 11.2" stroke-linecap="butt"/></svg>
<svg class="i" style="left:1416px;top:194px" width="15" height="15" viewBox="0 0 15 15" fill="none" stroke="#5F7281" stroke-width="1.4" stroke-linecap="round" stroke-linejoin="round"><circle cx="6.8" cy="6.8" r="5.8"/><path d="M11 11 L14 14"/></svg>
<svg class="i" style="left:1444px;top:194.5px" width="14" height="14" viewBox="0 0 14 14" fill="none" stroke="#5F7281" stroke-width="1.4" stroke-linecap="round" stroke-linejoin="round"><path d="M0.9 1 H13.1 L8.6 6.8 V13 H5.4 V6.8 Z"/></svg>
<svg class="i" style="left:1472px;top:194px" width="14" height="14" viewBox="0 0 14 14" fill="none" stroke="#5F7281" stroke-width="1.4" stroke-linecap="round" stroke-linejoin="round"><rect x="0.8" y="0.8" width="12.4" height="12.4"/><path d="M4.5 0.8 V13.2"/></svg>
<div class="b" style="left:595.5px;top:231.5px;width:895.5px;height:708.5px;overflow:hidden">
<div class="b" style="left:0;top:0;width:895.5px;height:1px;background:#EBEEF1"></div>
<div class="b" style="left:0;top:28.80px;width:895.5px;height:1px;background:#EBEEF1"></div>
<div class="b" style="left:0;top:53.80px;width:895.5px;height:1px;background:#EBEEF1"></div>
<div class="b" style="left:0;top:78.80px;width:895.5px;height:1px;background:#EBEEF1"></div>
<div class="b" style="left:0;top:103.80px;width:895.5px;height:1px;background:#EBEEF1"></div>
<div class="b" style="left:0;top:128.80px;width:895.5px;height:1px;background:#EBEEF1"></div>
<div class="b" style="left:0;top:153.80px;width:895.5px;height:1px;background:#EBEEF1"></div>
<div class="b" style="left:0;top:178.80px;width:895.5px;height:1px;background:#EBEEF1"></div>
<div class="b" style="left:0;top:203.80px;width:895.5px;height:1px;background:#EBEEF1"></div>
<div class="b" style="left:0;top:228.80px;width:895.5px;height:1px;background:#EBEEF1"></div>
<div class="b" style="left:0;top:253.80px;width:895.5px;height:1px;background:#EBEEF1"></div>
<div class="b" style="left:0;top:278.80px;width:895.5px;height:1px;background:#EBEEF1"></div>
<div class="b" style="left:0;top:303.80px;width:895.5px;height:1px;background:#EBEEF1"></div>
<div class="b" style="left:0;top:328.80px;width:895.5px;height:1px;background:#EBEEF1"></div>
<div class="b" style="left:0;top:353.80px;width:895.5px;height:1px;background:#EBEEF1"></div>
<div class="b" style="left:0;top:378.80px;width:895.5px;height:1px;background:#EBEEF1"></div>
<div class="b" style="left:0;top:403.80px;width:895.5px;height:1px;background:#EBEEF1"></div>
<div class="b" style="left:0;top:428.80px;width:895.5px;height:1px;background:#EBEEF1"></div>
<div class="b" style="left:0;top:453.80px;width:895.5px;height:1px;background:#EBEEF1"></div>
<div class="b" style="left:0;top:478.80px;width:895.5px;height:1px;background:#EBEEF1"></div>
<div class="b" style="left:0;top:503.80px;width:895.5px;height:1px;background:#EBEEF1"></div>
<div class="b" style="left:0;top:528.80px;width:895.5px;height:1px;background:#EBEEF1"></div>
<div class="b" style="left:0;top:553.80px;width:895.5px;height:1px;background:#EBEEF1"></div>
<div class="b" style="left:0;top:578.80px;width:895.5px;height:1px;background:#EBEEF1"></div>
<div class="b" style="left:0;top:603.80px;width:895.5px;height:1px;background:#EBEEF1"></div>
<div class="b" style="left:0;top:628.80px;width:895.5px;height:1px;background:#EBEEF1"></div>
<div class="b" style="left:0;top:653.80px;width:895.5px;height:1px;background:#EBEEF1"></div>
<div class="b" style="left:0;top:678.80px;width:895.5px;height:1px;background:#EBEEF1"></div>
<div class="b" style="left:0;top:703.80px;width:895.5px;height:1px;background:#EBEEF1"></div>
<div class="b" style="left:0;top:728.80px;width:895.5px;height:1px;background:#EBEEF1"></div>
<div class="b" style="left:0.00px;top:0;width:1px;height:708.5px;background:#EBEEF1"></div>
<div class="b" style="left:51.90px;top:0;width:1px;height:708.5px;background:#EBEEF1"></div>
<div class="b" style="left:207.90px;top:0;width:1px;height:708.5px;background:#EBEEF1"></div>
<div class="b" style="left:305.00px;top:0;width:1px;height:708.5px;background:#EBEEF1"></div>
<div class="b" style="left:449.00px;top:0;width:1px;height:708.5px;background:#EBEEF1"></div>
<div class="b" style="left:562.00px;top:0;width:1px;height:708.5px;background:#EBEEF1"></div>
<div class="b" style="left:654.00px;top:0;width:1px;height:708.5px;background:#EBEEF1"></div>
<div class="b" style="left:829.10px;top:0;width:1px;height:708.5px;background:#EBEEF1"></div>
</div>
<div class="b" style="left:0;top:0;width:1491px;height:945px;overflow:hidden">
<svg class="i" style="left:656.6px;top:238px" width="15" height="16" viewBox="0 0 15 16" fill="none" stroke="#5F7281" stroke-width="1.5" stroke-linecap="round" stroke-linejoin="round"><text x="0.2" y="12.5" font-family="Liberation Sans" font-weight="700" font-size="9.8" fill="#5F7281" stroke="none">1</text><text x="5.2" y="7.4" font-family="Liberation Sans" font-weight="700" font-size="9.8" fill="#5F7281" stroke="none">2</text><text x="9.8" y="14.5" font-family="Liberation Sans" font-weight="700" font-size="9.8" fill="#5F7281" stroke="none">3</text></svg>
<div class="t" style="left:676.6px;top:239.34px;font-size:12px;line-height:15.0px;color:#11171C;font-weight:700;letter-spacing:0.108px;">Transaction ID</div>
<svg class="i" style="left:812.8px;top:237.8px" width="14.2" height="14.6" viewBox="0 0 14.2 14.6" fill="none" stroke="#5F7281" stroke-width="1.4" stroke-linecap="round" stroke-linejoin="round"><rect x="0.7" y="2.3" width="12.8" height="11.6" rx="0.8"/><path d="M0.7 5.6 H13.5 M3.8 0.6 V3.2 M10.4 0.6 V3.2"/><circle cx="9.8" cy="10.2" r="1.1" fill="#5F7281" stroke="none"/></svg>
<div class="t" style="left:832.4px;top:239.34px;font-size:12px;line-height:15.0px;color:#11171C;font-weight:700;letter-spacing:0.222px;">Date</div>
<svg class="i" style="left:909px;top:238px" width="15" height="16" viewBox="0 0 15 16" fill="none" stroke="#5F7281" stroke-width="1.5" stroke-linecap="round" stroke-linejoin="round"><text x="-0.2" y="12.5" font-family="Liberation Sans" font-weight="700" font-size="9.6" fill="#5F7281" stroke="none">A</text><text x="5.4" y="7.4" font-family="Liberation Sans" font-weight="700" font-size="9.6" fill="#5F7281" stroke="none">B</text><text x="9.6" y="14.5" font-family="Liberation Sans" font-weight="700" font-size="9.6" fill="#5F7281" stroke="none">C</text></svg>
<div class="t" style="left:929.5px;top:239.34px;font-size:12px;line-height:15.0px;color:#11171C;font-weight:700;letter-spacing:0.114px;">Customer ID</div>
<svg class="i" style="left:1053px;top:238px" width="15" height="16" viewBox="0 0 15 16" fill="none" stroke="#5F7281" stroke-width="1.5" stroke-linecap="round" stroke-linejoin="round"><text x="-0.2" y="12.5" font-family="Liberation Sans" font-weight="700" font-size="9.6" fill="#5F7281" stroke="none">A</text><text x="5.4" y="7.4" font-family="Liberation Sans" font-weight="700" font-size="9.6" fill="#5F7281" stroke="none">B</text><text x="9.6" y="14.5" font-family="Liberation Sans" font-weight="700" font-size="9.6" fill="#5F7281" stroke="none">C</text></svg>
<div class="t" style="left:1073.5px;top:239.34px;font-size:12px;line-height:15.0px;color:#11171C;font-weight:700;letter-spacing:0.11px;">Gender</div>
<svg class="i" style="left:1166.8px;top:238px" width="15" height="16" viewBox="0 0 15 16" fill="none" stroke="#5F7281" stroke-width="1.5" stroke-linecap="round" stroke-linejoin="round"><text x="0.2" y="12.5" font-family="Liberation Sans" font-weight="700" font-size="9.8" fill="#5F7281" stroke="none">1</text><text x="5.2" y="7.4" font-family="Liberation Sans" font-weight="700" font-size="9.8" fill="#5F7281" stroke="none">2</text><text x="9.8" y="14.5" font-family="Liberation Sans" font-weight="700" font-size="9.8" fill="#5F7281" stroke="none">3</text></svg>
<div class="t" style="left:1187px;top:239.34px;font-size:12px;line-height:15.0px;color:#11171C;font-weight:700;letter-spacing:0.11px;">Age</div>
<svg class="i" style="left:1258.5px;top:238px" width="15" height="16" viewBox="0 0 15 16" fill="none" stroke="#5F7281" stroke-width="1.5" stroke-linecap="round" stroke-linejoin="round"><text x="-0.2" y="12.5" font-family="Liberation Sans" font-weight="700" font-size="9.6" fill="#5F7281" stroke="none">A</text><text x="5.4" y="7.4" font-family="Liberation Sans" font-weight="700" font-size="9.6" fill="#5F7281" stroke="none">B</text><text x="9.6" y="14.5" font-family="Liberation Sans" font-weight="700" font-size="9.6" fill="#5F7281" stroke="none">C</text></svg>
<div class="t" style="left:1279px;top:239.34px;font-size:12px;line-height:15.0px;color:#11171C;font-weight:700;letter-spacing:0.11px;">Product Category</div>
<svg class="i" style="left:1434px;top:238px" width="15" height="16" viewBox="0 0 15 16" fill="none" stroke="#5F7281" stroke-width="1.5" stroke-linecap="round" stroke-linejoin="round"><text x="0.2" y="12.5" font-family="Liberation Sans" font-weight="700" font-size="9.8" fill="#5F7281" stroke="none">1</text><text x="5.2" y="7.4" font-family="Liberation Sans" font-weight="700" font-size="9.8" fill="#5F7281" stroke="none">2</text><text x="9.8" y="14.5" font-family="Liberation Sans" font-weight="700" font-size="9.8" fill="#5F7281" stroke="none">3</text></svg>
<div class="t" style="left:1454.5px;top:239.34px;font-size:12px;line-height:15.0px;color:#11171C;font-weight:700;letter-spacing:0.11px;">Quanti</div>
</div>
<div class="t" style="left:572.0px;width:100px;text-align:center;top:266.14px;font-size:12px;line-height:15.0px;color:#5F7281;font-weight:400;letter-spacing:0.4px">1</div>
<div class="t" style="right:717.3000000000001px;top:266.14px;font-size:12px;line-height:15.0px;color:#11171C;font-weight:400;letter-spacing:0.4px;">1</div>
<div class="t" style="left:812.4px;top:266.14px;font-size:12px;line-height:15.0px;color:#11171C;font-weight:400;letter-spacing:1.05px;">2023-11-24</div>
<div class="t" style="left:909.2px;top:266.14px;font-size:12px;line-height:15.0px;color:#11171C;font-weight:400;letter-spacing:0.24px;">CUST001</div>
<div class="t" style="left:1053.0px;top:266.14px;font-size:12px;line-height:15.0px;color:#11171C;font-weight:400;letter-spacing:0.1px;">Male</div>
<div class="t" style="right:271.0999999999999px;top:266.14px;font-size:12px;line-height:15.0px;color:#11171C;font-weight:400;letter-spacing:0.4px;">34</div>
<div class="t" style="left:1258.0px;top:266.14px;font-size:12px;line-height:15.0px;color:#11171C;font-weight:400;letter-spacing:0.22px;">Beauty</div>
<div class="t" style="left:572.0px;width:100px;text-align:center;top:291.14px;font-size:12px;line-height:15.0px;color:#5F7281;font-weight:400;letter-spacing:0.4px">2</div>
<div class="t" style="right:717.3000000000001px;top:291.14px;font-size:12px;line-height:15.0px;color:#11171C;font-weight:400;letter-spacing:0.4px;">2</div>
<div class="t" style="left:812.4px;top:291.14px;font-size:12px;line-height:15.0px;color:#11171C;font-weight:400;letter-spacing:1.05px;">2023-02-27</div>
<div class="t" style="left:909.2px;top:291.14px;font-size:12px;line-height:15.0px;color:#11171C;font-weight:400;letter-spacing:0.24px;">CUST002</div>
<div class="t" style="left:1053.0px;top:291.14px;font-size:12px;line-height:15.0px;color:#11171C;font-weight:400;letter-spacing:0.1px;">Female</div>
<div class="t" style="right:271.0999999999999px;top:291.14px;font-size:12px;line-height:15.0px;color:#11171C;font-weight:400;letter-spacing:0.4px;">26</div>
<div class="t" style="left:1258.0px;top:291.14px;font-size:12px;line-height:15.0px;color:#11171C;font-weight:400;letter-spacing:0.22px;">Clothing</div>
<div class="t" style="left:572.0px;width:100px;text-align:center;top:316.14px;font-size:12px;line-height:15.0px;color:#5F7281;font-weight:400;letter-spacing:0.4px">3</div>
<div class="t" style="right:717.3000000000001px;top:316.14px;font-size:12px;line-height:15.0px;color:#11171C;font-weight:400;letter-spacing:0.4px;">3</div>
<div class="t" style="left:812.4px;top:316.14px;font-size:12px;line-height:15.0px;color:#11171C;font-weight:400;letter-spacing:1.05px;">2023-01-13</div>
<div class="t" style="left:909.2px;top:316.14px;font-size:12px;line-height:15.0px;color:#11171C;font-weight:400;letter-spacing:0.24px;">CUST003</div>
<div class="t" style="left:1053.0px;top:316.14px;font-size:12px;line-height:15.0px;color:#11171C;font-weight:400;letter-spacing:0.1px;">Male</div>
<div class="t" style="right:271.0999999999999px;top:316.14px;font-size:12px;line-height:15.0px;color:#11171C;font-weight:400;letter-spacing:0.4px;">50</div>
<div class="t" style="left:1258.0px;top:316.14px;font-size:12px;line-height:15.0px;color:#11171C;font-weight:400;letter-spacing:0.22px;">Electronics</div>
<div class="t" style="left:572.0px;width:100px;text-align:center;top:341.14px;font-size:12px;line-height:15.0px;color:#5F7281;font-weight:400;letter-spacing:0.4px">4</div>
<div class="t" style="right:717.3000000000001px;top:341.14px;font-size:12px;line-height:15.0px;color:#11171C;font-weight:400;letter-spacing:0.4px;">4</div>
<div class="t" style="left:812.4px;top:341.14px;font-size:12px;line-height:15.0px;color:#11171C;font-weight:400;letter-spacing:1.05px;">2023-05-21</div>
<div class="t" style="left:909.2px;top:341.14px;font-size:12px;line-height:15.0px;color:#11171C;font-weight:400;letter-spacing:0.24px;">CUST004</div>
<div class="t" style="left:1053.0px;top:341.14px;font-size:12px;line-height:15.0px;color:#11171C;font-weight:400;letter-spacing:0.1px;">Male</div>
<div class="t" style="right:271.0999999999999px;top:341.14px;font-size:12px;line-height:15.0px;color:#11171C;font-weight:400;letter-spacing:0.4px;">37</div>
<div class="t" style="left:1258.0px;top:341.14px;font-size:12px;line-height:15.0px;color:#11171C;font-weight:400;letter-spacing:0.22px;">Clothing</div>
<div class="t" style="left:572.0px;width:100px;text-align:center;top:366.14px;font-size:12px;line-height:15.0px;color:#5F7281;font-weight:400;letter-spacing:0.4px">5</div>
<div class="t" style="right:717.3000000000001px;top:366.14px;font-size:12px;line-height:15.0px;color:#11171C;font-weight:400;letter-spacing:0.4px;">5</div>
<div class="t" style="left:812.4px;top:366.14px;font-size:12px;line-height:15.0px;color:#11171C;font-weight:400;letter-spacing:1.05px;">2023-05-06</div>
<div class="t" style="left:909.2px;top:366.14px;font-size:12px;line-height:15.0px;color:#11171C;font-weight:400;letter-spacing:0.24px;">CUST005</div>
<div class="t" style="left:1053.0px;top:366.14px;font-size:12px;line-height:15.0px;color:#11171C;font-weight:400;letter-spacing:0.1px;">Male</div>
<div class="t" style="right:271.0999999999999px;top:366.14px;font-size:12px;line-height:15.0px;color:#11171C;font-weight:400;letter-spacing:0.4px;">30</div>
<div class="t" style="left:1258.0px;top:366.14px;font-size:12px;line-height:15.0px;color:#11171C;font-weight:400;letter-spacing:0.22px;">Beauty</div>
<div class="t" style="left:572.0px;width:100px;text-align:center;top:391.14px;font-size:12px;line-height:15.0px;color:#5F7281;font-weight:400;letter-spacing:0.4px">6</div>
<div class="t" style="right:717.3000000000001px;top:391.14px;font-size:12px;line-height:15.0px;color:#11171C;font-weight:400;letter-spacing:0.4px;">6</div>
<div class="t" style="left:812.4px;top:391.14px;font-size:12px;line-height:15.0px;color:#11171C;font-weight:400;letter-spacing:1.05px;">2023-04-25</div>
<div class="t" style="left:909.2px;top:391.14px;font-size:12px;line-height:15.0px;color:#11171C;font-weight:400;letter-spacing:0.24px;">CUST006</div>
<div class="t" style="left:1053.0px;top:391.14px;font-size:12px;line-height:15.0px;color:#11171C;font-weight:400;letter-spacing:0.1px;">Female</div>
<div class="t" style="right:271.0999999999999px;top:391.14px;font-size:12px;line-height:15.0px;color:#11171C;font-weight:400;letter-spacing:0.4px;">45</div>
<div class="t" style="left:1258.0px;top:391.14px;font-size:12px;line-height:15.0px;color:#11171C;font-weight:400;letter-spacing:0.22px;">Beauty</div>
<div class="t" style="left:572.0px;width:100px;text-align:center;top:416.14px;font-size:12px;line-height:15.0px;color:#5F7281;font-weight:400;letter-spacing:0.4px">7</div>
<div class="t" style="right:717.3000000000001px;top:416.14px;font-size:12px;line-height:15.0px;color:#11171C;font-weight:400;letter-spacing:0.4px;">7</div>
<div class="t" style="left:812.4px;top:416.14px;font-size:12px;line-height:15.0px;color:#11171C;font-weight:400;letter-spacing:1.05px;">2023-03-13</div>
<div class="t" style="left:909.2px;top:416.14px;font-size:12px;line-height:15.0px;color:#11171C;font-weight:400;letter-spacing:0.24px;">CUST007</div>
<div class="t" style="left:1053.0px;top:416.14px;font-size:12px;line-height:15.0px;color:#11171C;font-weight:400;letter-spacing:0.1px;">Male</div>
<div class="t" style="right:271.0999999999999px;top:416.14px;font-size:12px;line-height:15.0px;color:#11171C;font-weight:400;letter-spacing:0.4px;">46</div>
<div class="t" style="left:1258.0px;top:416.14px;font-size:12px;line-height:15.0px;color:#11171C;font-weight:400;letter-spacing:0.22px;">Clothing</div>
<div class="t" style="left:572.0px;width:100px;text-align:center;top:441.14px;font-size:12px;line-height:15.0px;color:#5F7281;font-weight:400;letter-spacing:0.4px">8</div>
<div class="t" style="right:717.3000000000001px;top:441.14px;font-size:12px;line-height:15.0px;color:#11171C;font-weight:400;letter-spacing:0.4px;">8</div>
<div class="t" style="left:812.4px;top:441.14px;font-size:12px;line-height:15.0px;color:#11171C;font-weight:400;letter-spacing:1.05px;">2023-02-22</div>
<div class="t" style="left:909.2px;top:441.14px;font-size:12px;line-height:15.0px;color:#11171C;font-weight:400;letter-spacing:0.24px;">CUST008</div>
<div class="t" style="left:1053.0px;top:441.14px;font-size:12px;line-height:15.0px;color:#11171C;font-weight:400;letter-spacing:0.1px;">Male</div>
<div class="t" style="right:271.0999999999999px;top:441.14px;font-size:12px;line-height:15.0px;color:#11171C;font-weight:400;letter-spacing:0.4px;">30</div>
<div class="t" style="left:1258.0px;top:441.14px;font-size:12px;line-height:15.0px;color:#11171C;font-weight:400;letter-spacing:0.22px;">Electronics</div>
<div class="t" style="left:572.0px;width:100px;text-align:center;top:466.14px;font-size:12px;line-height:15.0px;color:#5F7281;font-weight:400;letter-spacing:0.4px">9</div>
<div class="t" style="right:717.3000000000001px;top:466.14px;font-size:12px;line-height:15.0px;color:#11171C;font-weight:400;letter-spacing:0.4px;">9</div>
<div class="t" style="left:812.4px;top:466.14px;font-size:12px;line-height:15.0px;color:#11171C;font-weight:400;letter-spacing:1.05px;">2023-12-13</div>
<div class="t" style="left:909.2px;top:466.14px;font-size:12px;line-height:15.0px;color:#11171C;font-weight:400;letter-spacing:0.24px;">CUST009</div>
<div class="t" style="left:1053.0px;top:466.14px;font-size:12px;line-height:15.0px;color:#11171C;font-weight:400;letter-spacing:0.1px;">Male</div>
<div class="t" style="right:271.0999999999999px;top:466.14px;font-size:12px;line-height:15.0px;color:#11171C;font-weight:400;letter-spacing:0.4px;">63</div>
<div class="t" style="left:1258.0px;top:466.14px;font-size:12px;line-height:15.0px;color:#11171C;font-weight:400;letter-spacing:0.22px;">Electronics</div>
<div class="t" style="left:572.0px;width:100px;text-align:center;top:491.14px;font-size:12px;line-height:15.0px;color:#5F7281;font-weight:400;letter-spacing:0.4px">10</div>
<div class="t" style="right:717.3000000000001px;top:491.14px;font-size:12px;line-height:15.0px;color:#11171C;font-weight:400;letter-spacing:0.4px;">10</div>
<div class="t" style="left:812.4px;top:491.14px;font-size:12px;line-height:15.0px;color:#11171C;font-weight:400;letter-spacing:1.05px;">2023-10-07</div>
<div class="t" style="left:909.2px;top:491.14px;font-size:12px;line-height:15.0px;color:#11171C;font-weight:400;letter-spacing:0.24px;">CUST010</div>
<div class="t" style="left:1053.0px;top:491.14px;font-size:12px;line-height:15.0px;color:#11171C;font-weight:400;letter-spacing:0.1px;">Female</div>
<div class="t" style="right:271.0999999999999px;top:491.14px;font-size:12px;line-height:15.0px;color:#11171C;font-weight:400;letter-spacing:0.4px;">52</div>
<div class="t" style="left:1258.0px;top:491.14px;font-size:12px;line-height:15.0px;color:#11171C;font-weight:400;letter-spacing:0.22px;">Clothing</div>
<div class="t" style="left:572.0px;width:100px;text-align:center;top:516.14px;font-size:12px;line-height:15.0px;color:#5F7281;font-weight:400;letter-spacing:0.4px">11</div>
<div class="t" style="right:717.3000000000001px;top:516.14px;font-size:12px;line-height:15.0px;color:#11171C;font-weight:400;letter-spacing:0.4px;">11</div>
<div class="t" style="left:812.4px;top:516.14px;font-size:12px;line-height:15.0px;color:#11171C;font-weight:400;letter-spacing:1.05px;">2023-02-14</div>
<div class="t" style="left:909.2px;top:516.14px;font-size:12px;line-height:15.0px;color:#11171C;font-weight:400;letter-spacing:0.24px;">CUST011</div>
<div class="t" style="left:1053.0px;top:516.14px;font-size:12px;line-height:15.0px;color:#11171C;font-weight:400;letter-spacing:0.1px;">Male</div>
<div class="t" style="right:271.0999999999999px;top:516.14px;font-size:12px;line-height:15.0px;color:#11171C;font-weight:400;letter-spacing:0.4px;">23</div>
<div class="t" style="left:1258.0px;top:516.14px;font-size:12px;line-height:15.0px;color:#11171C;font-weight:400;letter-spacing:0.22px;">Clothing</div>
<div class="t" style="left:572.0px;width:100px;text-align:center;top:541.14px;font-size:12px;line-height:15.0px;color:#5F7281;font-weight:400;letter-spacing:0.4px">12</div>
<div class="t" style="right:717.3000000000001px;top:541.14px;font-size:12px;line-height:15.0px;color:#11171C;font-weight:400;letter-spacing:0.4px;">12</div>
<div class="t" style="left:812.4px;top:541.14px;font-size:12px;line-height:15.0px;color:#11171C;font-weight:400;letter-spacing:1.05px;">2023-10-30</div>
<div class="t" style="left:909.2px;top:541.14px;font-size:12px;line-height:15.0px;color:#11171C;font-weight:400;letter-spacing:0.24px;">CUST012</div>
<div class="t" style="left:1053.0px;top:541.14px;font-size:12px;line-height:15.0px;color:#11171C;font-weight:400;letter-spacing:0.1px;">Male</div>
<div class="t" style="right:271.0999999999999px;top:541.14px;font-size:12px;line-height:15.0px;color:#11171C;font-weight:400;letter-spacing:0.4px;">35</div>
<div class="t" style="left:1258.0px;top:541.14px;font-size:12px;line-height:15.0px;color:#11171C;font-weight:400;letter-spacing:0.22px;">Beauty</div>
<div class="t" style="left:572.0px;width:100px;text-align:center;top:566.14px;font-size:12px;line-height:15.0px;color:#5F7281;font-weight:400;letter-spacing:0.4px">13</div>
<div class="t" style="right:717.3000000000001px;top:566.14px;font-size:12px;line-height:15.0px;color:#11171C;font-weight:400;letter-spacing:0.4px;">13</div>
<div class="t" style="left:812.4px;top:566.14px;font-size:12px;line-height:15.0px;color:#11171C;font-weight:400;letter-spacing:1.05px;">2023-08-05</div>
<div class="t" style="left:909.2px;top:566.14px;font-size:12px;line-height:15.0px;color:#11171C;font-weight:400;letter-spacing:0.24px;">CUST013</div>
<div class="t" style="left:1053.0px;top:566.14px;font-size:12px;line-height:15.0px;color:#11171C;font-weight:400;letter-spacing:0.1px;">Male</div>
<div class="t" style="right:271.0999999999999px;top:566.14px;font-size:12px;line-height:15.0px;color:#11171C;font-weight:400;letter-spacing:0.4px;">22</div>
<div class="t" style="left:1258.0px;top:566.14px;font-size:12px;line-height:15.0px;color:#11171C;font-weight:400;letter-spacing:0.22px;">Electronics</div>
<div class="t" style="left:572.0px;width:100px;text-align:center;top:591.14px;font-size:12px;line-height:15.0px;color:#5F7281;font-weight:400;letter-spacing:0.4px">14</div>
<div class="t" style="right:717.3000000000001px;top:591.14px;font-size:12px;line-height:15.0px;color:#11171C;font-weight:400;letter-spacing:0.4px;">14</div>
<div class="t" style="left:812.4px;top:591.14px;font-size:12px;line-height:15.0px;color:#11171C;font-weight:400;letter-spacing:1.05px;">2023-01-17</div>
<div class="t" style="left:909.2px;top:591.14px;font-size:12px;line-height:15.0px;color:#11171C;font-weight:400;letter-spacing:0.24px;">CUST014</div>
<div class="t" style="left:1053.0px;top:591.14px;font-size:12px;line-height:15.0px;color:#11171C;font-weight:400;letter-spacing:0.1px;">Male</div>
<div class="t" style="right:271.0999999999999px;top:591.14px;font-size:12px;line-height:15.0px;color:#11171C;font-weight:400;letter-spacing:0.4px;">64</div>
<div class="t" style="left:1258.0px;top:591.14px;font-size:12px;line-height:15.0px;color:#11171C;font-weight:400;letter-spacing:0.22px;">Clothing</div>
<div class="t" style="left:572.0px;width:100px;text-align:center;top:616.14px;font-size:12px;line-height:15.0px;color:#5F7281;font-weight:400;letter-spacing:0.4px">15</div>
<div class="t" style="right:717.3000000000001px;top:616.14px;font-size:12px;line-height:15.0px;color:#11171C;font-weight:400;letter-spacing:0.4px;">15</div>
<div class="t" style="left:812.4px;top:616.14px;font-size:12px;line-height:15.0px;color:#11171C;font-weight:400;letter-spacing:1.05px;">2023-01-16</div>
<div class="t" style="left:909.2px;top:616.14px;font-size:12px;line-height:15.0px;color:#11171C;font-weight:400;letter-spacing:0.24px;">CUST015</div>
<div class="t" style="left:1053.0px;top:616.14px;font-size:12px;line-height:15.0px;color:#11171C;font-weight:400;letter-spacing:0.1px;">Female</div>
<div class="t" style="right:271.0999999999999px;top:616.14px;font-size:12px;line-height:15.0px;color:#11171C;font-weight:400;letter-spacing:0.4px;">42</div>
<div class="t" style="left:1258.0px;top:616.14px;font-size:12px;line-height:15.0px;color:#11171C;font-weight:400;letter-spacing:0.22px;">Electronics</div>
<div class="t" style="left:572.0px;width:100px;text-align:center;top:641.14px;font-size:12px;line-height:15.0px;color:#5F7281;font-weight:400;letter-spacing:0.4px">16</div>
<div class="t" style="right:717.3000000000001px;top:641.14px;font-size:12px;line-height:15.0px;color:#11171C;font-weight:400;letter-spacing:0.4px;">16</div>
<div class="t" style="left:812.4px;top:641.14px;font-size:12px;line-height:15.0px;color:#11171C;font-weight:400;letter-spacing:1.05px;">2023-02-17</div>
<div class="t" style="left:909.2px;top:641.14px;font-size:12px;line-height:15.0px;color:#11171C;font-weight:400;letter-spacing:0.24px;">CUST016</div>
<div class="t" style="left:1053.0px;top:641.14px;font-size:12px;line-height:15.0px;color:#11171C;font-weight:400;letter-spacing:0.1px;">Male</div>
<div class="t" style="right:271.0999999999999px;top:641.14px;font-size:12px;line-height:15.0px;color:#11171C;font-weight:400;letter-spacing:0.4px;">19</div>
<div class="t" style="left:1258.0px;top:641.14px;font-size:12px;line-height:15.0px;color:#11171C;font-weight:400;letter-spacing:0.22px;">Clothing</div>
<div class="t" style="left:572.0px;width:100px;text-align:center;top:666.14px;font-size:12px;line-height:15.0px;color:#5F7281;font-weight:400;letter-spacing:0.4px">17</div>
<div class="t" style="right:717.3000000000001px;top:666.14px;font-size:12px;line-height:15.0px;color:#11171C;font-weight:400;letter-spacing:0.4px;">17</div>
<div class="t" style="left:812.4px;top:666.14px;font-size:12px;line-height:15.0px;color:#11171C;font-weight:400;letter-spacing:1.05px;">2023-04-22</div>
<div class="t" style="left:909.2px;top:666.14px;font-size:12px;line-height:15.0px;color:#11171C;font-weight:400;letter-spacing:0.24px;">CUST017</div>
<div class="t" style="left:1053.0px;top:666.14px;font-size:12px;line-height:15.0px;color:#11171C;font-weight:400;letter-spacing:0.1px;">Female</div>
<div class="t" style="right:271.0999999999999px;top:666.14px;font-size:12px;line-height:15.0px;color:#11171C;font-weight:400;letter-spacing:0.4px;">27</div>
<div class="t" style="left:1258.0px;top:666.14px;font-size:12px;line-height:15.0px;color:#11171C;font-weight:400;letter-spacing:0.22px;">Clothing</div>
<div class="t" style="left:572.0px;width:100px;text-align:center;top:691.14px;font-size:12px;line-height:15.0px;color:#5F7281;font-weight:400;letter-spacing:0.4px">18</div>
<div class="t" style="right:717.3000000000001px;top:691.14px;font-size:12px;line-height:15.0px;color:#11171C;font-weight:400;letter-spacing:0.4px;">18</div>
<div class="t" style="left:812.4px;top:691.14px;font-size:12px;line-height:15.0px;color:#11171C;font-weight:400;letter-spacing:1.05px;">2023-04-30</div>
<div class="t" style="left:909.2px;top:691.14px;font-size:12px;line-height:15.0px;color:#11171C;font-weight:400;letter-spacing:0.24px;">CUST018</div>
<div class="t" style="left:1053.0px;top:691.14px;font-size:12px;line-height:15.0px;color:#11171C;font-weight:400;letter-spacing:0.1px;">Female</div>
<div class="t" style="right:271.0999999999999px;top:691.14px;font-size:12px;line-height:15.0px;color:#11171C;font-weight:400;letter-spacing:0.4px;">47</div>
<div class="t" style="left:1258.0px;top:691.14px;font-size:12px;line-height:15.0px;color:#11171C;font-weight:400;letter-spacing:0.22px;">Electronics</div>
<div class="t" style="left:572.0px;width:100px;text-align:center;top:716.14px;font-size:12px;line-height:15.0px;color:#5F7281;font-weight:400;letter-spacing:0.4px">19</div>
<div class="t" style="right:717.3000000000001px;top:716.14px;font-size:12px;line-height:15.0px;color:#11171C;font-weight:400;letter-spacing:0.4px;">19</div>
<div class="t" style="left:812.4px;top:716.14px;font-size:12px;line-height:15.0px;color:#11171C;font-weight:400;letter-spacing:1.05px;">2023-09-16</div>
<div class="t" style="left:909.2px;top:716.14px;font-size:12px;line-height:15.0px;color:#11171C;font-weight:400;letter-spacing:0.24px;">CUST019</div>
<div class="t" style="left:1053.0px;top:716.14px;font-size:12px;line-height:15.0px;color:#11171C;font-weight:400;letter-spacing:0.1px;">Female</div>
<div class="t" style="right:271.0999999999999px;top:716.14px;font-size:12px;line-height:15.0px;color:#11171C;font-weight:400;letter-spacing:0.4px;">62</div>
<div class="t" style="left:1258.0px;top:716.14px;font-size:12px;line-height:15.0px;color:#11171C;font-weight:400;letter-spacing:0.22px;">Clothing</div>
<div class="t" style="left:572.0px;width:100px;text-align:center;top:741.14px;font-size:12px;line-height:15.0px;color:#5F7281;font-weight:400;letter-spacing:0.4px">20</div>
<div class="t" style="right:717.3000000000001px;top:741.14px;font-size:12px;line-height:15.0px;color:#11171C;font-weight:400;letter-spacing:0.4px;">20</div>
<div class="t" style="left:812.4px;top:741.14px;font-size:12px;line-height:15.0px;color:#11171C;font-weight:400;letter-spacing:1.05px;">2023-11-05</div>
<div class="t" style="left:909.2px;top:741.14px;font-size:12px;line-height:15.0px;color:#11171C;font-weight:400;letter-spacing:0.24px;">CUST020</div>
<div class="t" style="left:1053.0px;top:741.14px;font-size:12px;line-height:15.0px;color:#11171C;font-weight:400;letter-spacing:0.1px;">Male</div>
<div class="t" style="right:271.0999999999999px;top:741.14px;font-size:12px;line-height:15.0px;color:#11171C;font-weight:400;letter-spacing:0.4px;">22</div>
<div class="t" style="left:1258.0px;top:741.14px;font-size:12px;line-height:15.0px;color:#11171C;font-weight:400;letter-spacing:0.22px;">Clothing</div>
<div class="t" style="left:572.0px;width:100px;text-align:center;top:766.14px;font-size:12px;line-height:15.0px;color:#5F7281;font-weight:400;letter-spacing:0.4px">21</div>
<div class="t" style="right:717.3000000000001px;top:766.14px;font-size:12px;line-height:15.0px;color:#11171C;font-weight:400;letter-spacing:0.4px;">21</div>
<div class="t" style="left:812.4px;top:766.14px;font-size:12px;line-height:15.0px;color:#11171C;font-weight:400;letter-spacing:1.05px;">2023-01-14</div>
<div class="t" style="left:909.2px;top:766.14px;font-size:12px;line-height:15.0px;color:#11171C;font-weight:400;letter-spacing:0.24px;">CUST021</div>
<div class="t" style="left:1053.0px;top:766.14px;font-size:12px;line-height:15.0px;color:#11171C;font-weight:400;letter-spacing:0.1px;">Female</div>
<div class="t" style="right:271.0999999999999px;top:766.14px;font-size:12px;line-height:15.0px;color:#11171C;font-weight:400;letter-spacing:0.4px;">50</div>
<div class="t" style="left:1258.0px;top:766.14px;font-size:12px;line-height:15.0px;color:#11171C;font-weight:400;letter-spacing:0.22px;">Beauty</div>
<div class="t" style="left:572.0px;width:100px;text-align:center;top:791.14px;font-size:12px;line-height:15.0px;color:#5F7281;font-weight:400;letter-spacing:0.4px">22</div>
<div class="t" style="right:717.3000000000001px;top:791.14px;font-size:12px;line-height:15.0px;color:#11171C;font-weight:400;letter-spacing:0.4px;">22</div>
<div class="t" style="left:812.4px;top:791.14px;font-size:12px;line-height:15.0px;color:#11171C;font-weight:400;letter-spacing:1.05px;">2023-10-15</div>
<div class="t" style="left:909.2px;top:791.14px;font-size:12px;line-height:15.0px;color:#11171C;font-weight:400;letter-spacing:0.24px;">CUST022</div>
<div class="t" style="left:1053.0px;top:791.14px;font-size:12px;line-height:15.0px;color:#11171C;font-weight:400;letter-spacing:0.1px;">Male</div>
<div class="t" style="right:271.0999999999999px;top:791.14px;font-size:12px;line-height:15.0px;color:#11171C;font-weight:400;letter-spacing:0.4px;">18</div>
<div class="t" style="left:1258.0px;top:791.14px;font-size:12px;line-height:15.0px;color:#11171C;font-weight:400;letter-spacing:0.22px;">Clothing</div>
<div class="t" style="left:572.0px;width:100px;text-align:center;top:816.14px;font-size:12px;line-height:15.0px;color:#5F7281;font-weight:400;letter-spacing:0.4px">23</div>
<div class="t" style="right:717.3000000000001px;top:816.14px;font-size:12px;line-height:15.0px;color:#11171C;font-weight:400;letter-spacing:0.4px;">23</div>
<div class="t" style="left:812.4px;top:816.14px;font-size:12px;line-height:15.0px;color:#11171C;font-weight:400;letter-spacing:1.05px;">2023-04-12</div>
<div class="t" style="left:909.2px;top:816.14px;font-size:12px;line-height:15.0px;color:#11171C;font-weight:400;letter-spacing:0.24px;">CUST023</div>
<div class="t" style="left:1053.0px;top:816.14px;font-size:12px;line-height:15.0px;color:#11171C;font-weight:400;letter-spacing:0.1px;">Female</div>
<div class="t" style="right:271.0999999999999px;top:816.14px;font-size:12px;line-height:15.0px;color:#11171C;font-weight:400;letter-spacing:0.4px;">35</div>
<div class="t" style="left:1258.0px;top:816.14px;font-size:12px;line-height:15.0px;color:#11171C;font-weight:400;letter-spacing:0.22px;">Clothing</div>
<div class="t" style="left:572.0px;width:100px;text-align:center;top:841.14px;font-size:12px;line-height:15.0px;color:#5F7281;font-weight:400;letter-spacing:0.4px">24</div>
<div class="t" style="right:717.3000000000001px;top:841.14px;font-size:12px;line-height:15.0px;color:#11171C;font-weight:400;letter-spacing:0.4px;">24</div>
<div class="t" style="left:812.4px;top:841.14px;font-size:12px;line-height:15.0px;color:#11171C;font-weight:400;letter-spacing:1.05px;">2023-11-29</div>
<div class="t" style="left:909.2px;top:841.14px;font-size:12px;line-height:15.0px;color:#11171C;font-weight:400;letter-spacing:0.24px;">CUST024</div>
<div class="t" style="left:1053.0px;top:841.14px;font-size:12px;line-height:15.0px;color:#11171C;font-weight:400;letter-spacing:0.1px;">Female</div>
<div class="t" style="right:271.0999999999999px;top:841.14px;font-size:12px;line-height:15.0px;color:#11171C;font-weight:400;letter-spacing:0.4px;">49</div>
<div class="t" style="left:1258.0px;top:841.14px;font-size:12px;line-height:15.0px;color:#11171C;font-weight:400;letter-spacing:0.22px;">Clothing</div>
<div class="t" style="left:572.0px;width:100px;text-align:center;top:866.14px;font-size:12px;line-height:15.0px;color:#5F7281;font-weight:400;letter-spacing:0.4px">25</div>
<div class="t" style="right:717.3000000000001px;top:866.14px;font-size:12px;line-height:15.0px;color:#11171C;font-weight:400;letter-spacing:0.4px;">25</div>
<div class="t" style="left:812.4px;top:866.14px;font-size:12px;line-height:15.0px;color:#11171C;font-weight:400;letter-spacing:1.05px;">2023-12-26</div>
<div class="t" style="left:909.2px;top:866.14px;font-size:12px;line-height:15.0px;color:#11171C;font-weight:400;letter-spacing:0.24px;">CUST025</div>
<div class="t" style="left:1053.0px;top:866.14px;font-size:12px;line-height:15.0px;color:#11171C;font-weight:400;letter-spacing:0.1px;">Female</div>
<div class="t" style="right:271.0999999999999px;top:866.14px;font-size:12px;line-height:15.0px;color:#11171C;font-weight:400;letter-spacing:0.4px;">64</div>
<div class="t" style="left:1258.0px;top:866.14px;font-size:12px;line-height:15.0px;color:#11171C;font-weight:400;letter-spacing:0.22px;">Beauty</div>
<div class="t" style="left:572.0px;width:100px;text-align:center;top:891.14px;font-size:12px;line-height:15.0px;color:#5F7281;font-weight:400;letter-spacing:0.4px">26</div>
<div class="t" style="right:717.3000000000001px;top:891.14px;font-size:12px;line-height:15.0px;color:#11171C;font-weight:400;letter-spacing:0.4px;">26</div>
<div class="t" style="left:812.4px;top:891.14px;font-size:12px;line-height:15.0px;color:#11171C;font-weight:400;letter-spacing:1.05px;">2023-10-07</div>
<div class="t" style="left:909.2px;top:891.14px;font-size:12px;line-height:15.0px;color:#11171C;font-weight:400;letter-spacing:0.24px;">CUST026</div>
<div class="t" style="left:1053.0px;top:891.14px;font-size:12px;line-height:15.0px;color:#11171C;font-weight:400;letter-spacing:0.1px;">Female</div>
<div class="t" style="right:271.0999999999999px;top:891.14px;font-size:12px;line-height:15.0px;color:#11171C;font-weight:400;letter-spacing:0.4px;">28</div>
<div class="t" style="left:1258.0px;top:891.14px;font-size:12px;line-height:15.0px;color:#11171C;font-weight:400;letter-spacing:0.22px;">Electronics</div>
<div class="t" style="left:572.0px;width:100px;text-align:center;top:916.14px;font-size:12px;line-height:15.0px;color:#5F7281;font-weight:400;letter-spacing:0.4px">27</div>
<div class="t" style="right:717.3000000000001px;top:916.14px;font-size:12px;line-height:15.0px;color:#11171C;font-weight:400;letter-spacing:0.4px;">27</div>
<div class="t" style="left:812.4px;top:916.14px;font-size:12px;line-height:15.0px;color:#11171C;font-weight:400;letter-spacing:1.05px;">2023-08-03</div>
<div class="t" style="left:909.2px;top:916.14px;font-size:12px;line-height:15.0px;color:#11171C;font-weight:400;letter-spacing:0.24px;">CUST027</div>
<div class="t" style="left:1053.0px;top:916.14px;font-size:12px;line-height:15.0px;color:#11171C;font-weight:400;letter-spacing:0.1px;">Female</div>
<div class="t" style="right:271.0999999999999px;top:916.14px;font-size:12px;line-height:15.0px;color:#11171C;font-weight:400;letter-spacing:0.4px;">38</div>
<div class="t" style="left:1258.0px;top:916.14px;font-size:12px;line-height:15.0px;color:#11171C;font-weight:400;letter-spacing:0.22px;">Beauty</div>
</div></body></html>
